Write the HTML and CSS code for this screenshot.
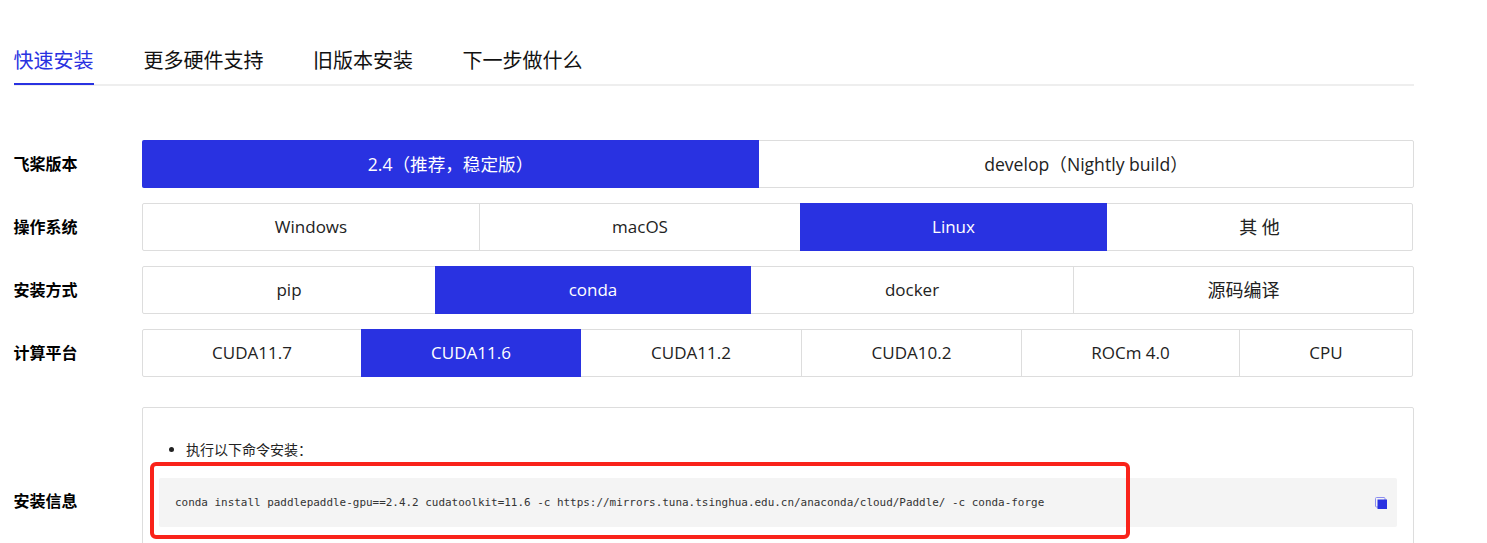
FILE: index.html
```html
<!DOCTYPE html>
<html lang="zh">
<head>
<meta charset="utf-8">
<title>快速安装</title>
<link rel="stylesheet" href="styles.css">
</head>
<body>
<main class="page">
  <nav class="tabs">
    <span class="tab active">快速安装</span>
    <span class="tab">更多硬件支持</span>
    <span class="tab">旧版本安装</span>
    <span class="tab">下一步做什么</span>
  </nav>
  <section class="rows">
    <div class="row">
      <div class="label">飞桨版本</div>
      <div class="group r1">
        <div class="cell on">2.4（推荐，稳定版）</div>
        <div class="cell">develop（Nightly build）</div>
      </div>
    </div>
    <div class="row">
      <div class="label">操作系统</div>
      <div class="group r2">
        <div class="cell">Windows</div>
        <div class="cell">macOS</div>
        <div class="cell on">Linux</div>
        <div class="cell wide">其 他</div>
      </div>
    </div>
    <div class="row">
      <div class="label">安装方式</div>
      <div class="group r3">
        <div class="cell">pip</div>
        <div class="cell on">conda</div>
        <div class="cell">docker</div>
        <div class="cell wide">源码编译</div>
      </div>
    </div>
    <div class="row">
      <div class="label">计算平台</div>
      <div class="group r4">
        <div class="cell">CUDA11.7</div>
        <div class="cell on">CUDA11.6</div>
        <div class="cell">CUDA11.2</div>
        <div class="cell">CUDA10.2</div>
        <div class="cell">ROCm 4.0</div>
        <div class="cell">CPU</div>
      </div>
    </div>
  </section>
  <section class="info">
    <div class="label info-label">安装信息</div>
    <div class="info-box">
      <ul class="steps"><li>执行以下命令安装：</li></ul>
      <div class="code">
        <code>conda install paddlepaddle-gpu==2.4.2 cudatoolkit=11.6 -c https://mirrors.tuna.tsinghua.edu.cn/anaconda/cloud/Paddle/ -c conda-forge</code>
        <svg class="copy" width="12" height="12" viewBox="0 0 12 12" aria-hidden="true">
          <rect x="0.5" y="0.5" width="9.5" height="9.5" rx="1" fill="none" stroke="#8c8ef0" stroke-width="1"/>
          <rect x="2.5" y="2.5" width="9.5" height="9.5" fill="#2932e1"/>
        </svg>
      </div>
    </div>
  </section>
  <div class="annotation"></div>
</main>
</body>
</html>
```
FILE: styles.css
```css
html, body {
  margin: 0;
  padding: 0;
  background: #fff;
}

body {
  height: 543px;
  overflow: hidden;
  color: #000;
  font-family: "Open Sans", "Noto Sans CJK SC", sans-serif;
}

.page {
  position: relative;
  width: 1400px;
  height: 543px;
  margin-left: 14px;
}

.tabs {
  display: flex;
  gap: 50px;
  width: 1400px;
  height: 86px;
  box-sizing: border-box;
  padding-top: 44px;
  border-bottom: 2px solid #eee;
}

.tab {
  height: 39px;
  padding-right: 1px;
  margin-right: -1px;
  font-size: 20px;
  line-height: 34px;
  text-indent: -0.5px;
  color: #111;
}

.tab.active {
  margin-right: 0;
  padding-right: 0.5px;
  color: #2932e1;
  border-bottom: 2px solid #2932e1;
}

.rows {
  display: flex;
  flex-direction: column;
  gap: 15px;
  margin-top: 54px;
}

.row {
  display: flex;
  align-items: center;
}

.label {
  width: 128px;
  flex: none;
  margin-left: -0.5px;
  padding-bottom: 2px;
  font-size: 16px;
  font-weight: 700;
  color: #000;
}

.group {
  display: grid;
  width: 1272px;
  height: 48px;
  box-sizing: border-box;
  margin-left: 0.5px;
  border: 1px solid #ddd;
  border-radius: 2px;
}

.r1 { grid-template-columns: 616px 1fr; }
.r2 { grid-template-columns: 336px 321px 307px 1fr; width: 1271px; }
.r3 { grid-template-columns: 292px 316px 322px 1fr; }
.r4 { grid-template-columns: 218px 220px 220px 220px 218px 1fr; width: 1271px; }

.cell {
  display: flex;
  align-items: center;
  justify-content: center;
  box-sizing: border-box;
  padding-bottom: 2px;
  border-left: 1px solid #ddd;
  font-size: 17px;
  color: #222;
  white-space: nowrap;
}

.r1 .cell {
  font-size: 17.6px;
}

.cell.wide {
  font-size: 18px;
}

.cell:first-child {
  border-left: 0;
}

.cell.on {
  margin: -1px 0;
  border-left: 0;
  background: #2932e1;
  color: #fff;
}

.cell.on:first-child {
  margin-left: -1px;
  border-radius: 2px 0 0 2px;
}

.cell.on + .cell {
  border-left: 0;
}

.info {
  display: flex;
  margin-top: 30px;
}

.info-label {
  margin-top: 81px;
}

.info-box {
  width: 1272px;
  height: 190px;
  box-sizing: border-box;
  margin-left: 0.5px;
  padding: 0 16px;
  border: 1px solid #ddd;
  border-radius: 2px;
}

.steps {
  margin: 31px 0 0;
  padding-left: 27px;
  font-size: 14px;
  line-height: 21px;
  color: #222;
}

.code {
  display: flex;
  align-items: center;
  justify-content: space-between;
  height: 49px;
  box-sizing: border-box;
  margin-top: 18px;
  padding: 0 10px 0 16px;
  background: #f4f4f4;
  border-radius: 2px;
}

.code code {
  font-family: "DejaVu Sans Mono", monospace;
  font-size: 10.95px;
  color: #333;
  white-space: pre;
}

.copy {
  flex: none;
}

.annotation {
  position: absolute;
  left: 136px;
  top: 462px;
  width: 980px;
  height: 77px;
  box-sizing: border-box;
  border: 4px solid #f9231a;
  border-radius: 6px;
}
```
